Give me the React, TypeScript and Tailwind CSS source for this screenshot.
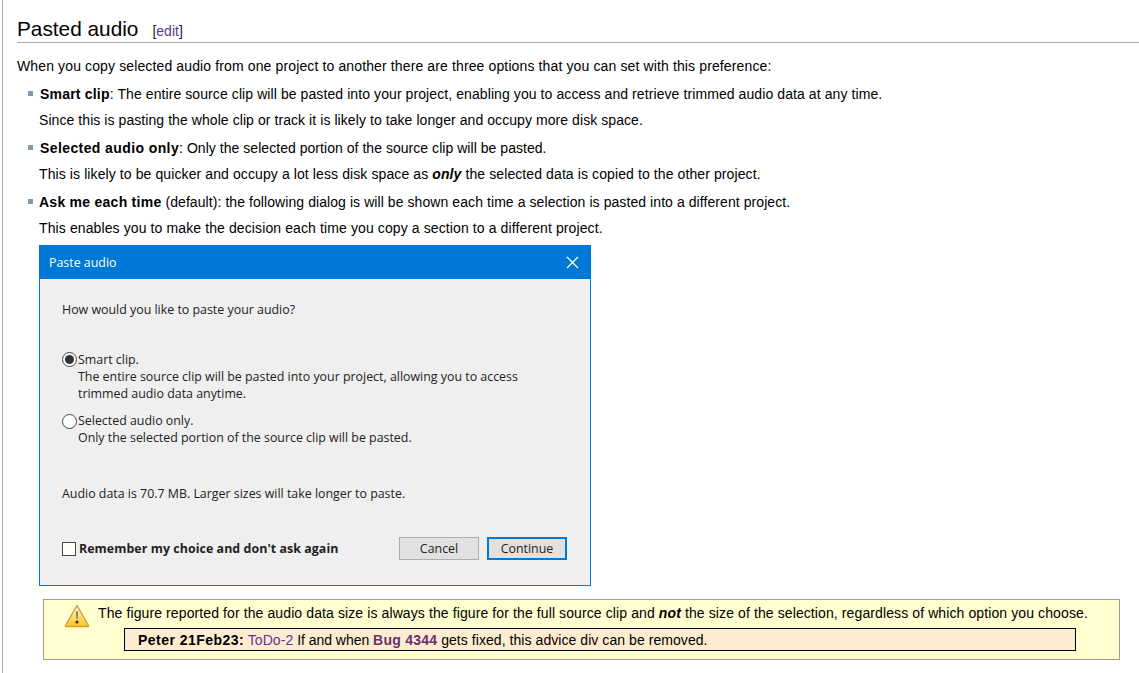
import React from "react";

const sans = "font-['Liberation_Sans',Arial,sans-serif]";
const dlg = "font-['Open_Sans','Noto_Sans',sans-serif]";

function Bullet({ first, second }: { first: React.ReactNode; second: React.ReactNode }) {
  return (
    <li className="relative h-[54px] pl-[22px]">
      <span className="absolute left-[11px] top-[10px] h-[5px] w-[5px] bg-[#7f9aa8]" />
      <p className="h-[26px] leading-[26px] whitespace-nowrap">{first}</p>
      <p className="h-[26px] leading-[26px] whitespace-nowrap">{second}</p>
    </li>
  );
}

function Radio({ checked }: { checked?: boolean }) {
  return (
    <span className="flex h-[15px] w-[15px] shrink-0 items-center justify-center rounded-full border border-[#444] bg-white">
      {checked && <span className="h-[9px] w-[9px] rounded-full bg-[#333]" />}
    </span>
  );
}

function WarnIcon() {
  return (
    <svg width="26" height="24" viewBox="0 0 26 24" className="shrink-0">
      <defs>
        <linearGradient id="w" x1="0" y1="0" x2="0" y2="1">
          <stop offset="0" stopColor="#fffbe0" />
          <stop offset="1" stopColor="#f7c61a" />
        </linearGradient>
      </defs>
      <path d="M13 1.5 L24.5 21.5 Q24.8 22.5 23.7 22.5 L2.3 22.5 Q1.2 22.5 1.5 21.5 Z" fill="url(#w)" stroke="#d69a3a" strokeWidth="1.4" strokeLinejoin="round" />
      <path d="M11.8 7.5 L14.2 7.5 L13.6 15 L12.4 15 Z" fill="#807a60" />
      <circle cx="13" cy="18" r="1.6" fill="#33301f" />
    </svg>
  );
}

export default function App() {
  return (
    <div className={`${sans} min-h-[673px] w-[1139px] overflow-hidden bg-white text-[14px] tracking-[0.11px] text-black`}>
      <div className="ml-[2px] min-h-[673px] border-l border-[#aaa] pl-[14px]">
        <div className="flex h-[43px] items-end border-b border-[#aaa]">
          <h2 className="text-[20.8px] leading-[26px] tracking-normal text-black">Pasted audio</h2>
          <span className="ml-[14px] text-[14px] leading-[22px] tracking-normal text-[#222]">
            [<span className="text-[#5a3696]">edit</span>]
          </span>
        </div>
        <p className="mt-[10px] h-[26px] leading-[26px] tracking-[0.127px] whitespace-nowrap">
          When you copy selected audio from one project to another there are three options that you can set with this preference:
        </p>
        <ul className="mt-[2px]">
          <Bullet
            first={<span className="tracking-[0.087px]"><b className="ml-[1px] tracking-[0.2px]">Smart clip</b>: The entire source clip will be pasted into your project, enabling you to access and retrieve trimmed audio data at any time.</span>}
            second={<span className="tracking-[0.07px]">Since this is pasting the whole clip or track it is likely to take longer and occupy more disk space.</span>}
          />
          <Bullet
            first={<span className="tracking-[0.04px]"><b className="ml-[1px] tracking-[0.4px]">Selected audio only</b>: Only the selected portion of the source clip will be pasted.</span>}
            second={<span className="tracking-[0.1px]">This is likely to be quicker and occupy a lot less disk space as <b><i>only</i></b> the selected data is copied to the other project.</span>}
          />
          <Bullet
            first={<span className="tracking-[0.075px]"><b className="tracking-[0.26px]">Ask me each time</b> (default): the following dialog is will be shown each time a selection is pasted into a different project.</span>}
            second="This enables you to make the decision each time you copy a section to a different project."
          />
        </ul>

        <div className={`${dlg} ml-[22px] mt-[2px] flex h-[341px] w-[552px] flex-col border border-[#0078d7] bg-[#efefef] text-[12.4px] tracking-normal text-[#222]`}>
          <div className="flex h-[33px] shrink-0 items-center justify-between bg-[#0078d7] pl-[9px] pr-[11px] text-white">
            <span className="mt-[1px]">Paste audio</span>
            <svg width="13" height="13" viewBox="0 0 13 13" fill="none" stroke="#fff" strokeWidth="1.2">
              <path d="M1 1 L12 12 M12 1 L1 12" />
            </svg>
          </div>
          <div className="flex flex-1 flex-col pl-[22px] pr-[23px]">
            <p className="mt-[22px] h-[18px] leading-[18px]">How would you like to paste your audio?</p>
            <div className="mt-[32px] flex flex-col leading-[17px]">
              <div className="flex items-center gap-[1px]"><Radio checked /><span>Smart clip.</span></div>
              <p className="pl-[16px]">The entire source clip will be pasted into your project, allowing you to access</p>
              <p className="pl-[16px]">trimmed audio data anytime.</p>
            </div>
            <div className="mt-[11px] flex flex-col leading-[16px]">
              <div className="flex items-center gap-[1px]"><Radio /><span>Selected audio only.</span></div>
              <p className="mt-[1px] pl-[16px]">Only the selected portion of the source clip will be pasted.</p>
            </div>
            <p className="mt-[39px] h-[18px] leading-[18px]">Audio data is 70.7 MB. Larger sizes will take longer to paste.</p>
            <div className="mt-[34px] flex h-[23px] items-center">
              <span className="h-[14px] w-[14px] shrink-0 border border-[#444] bg-white" />
              <span className="ml-[3px] mt-[2px] font-bold tracking-[0.06px]">Remember my choice and don't ask again</span>
              <button className="ml-auto h-[23px] w-[80px] border border-[#adadad] bg-[#e1e1e1] text-center leading-[20px] text-[#222]">Cancel</button>
              <button className="ml-[8px] h-[23px] w-[80px] border-2 border-[#0078d7] bg-[#e1e1e1] text-center leading-[18px] text-[#222]">Continue</button>
            </div>
          </div>
        </div>

        <div className="ml-[26px] mt-[13px] h-[61px] w-[1077px] border border-[#a0a090] bg-[#ffffd0] pt-[4px]">
          <div className="flex h-[19px] items-start pl-[20px]">
            <WarnIcon />
            <p className="ml-[8px] whitespace-nowrap leading-[19px] tracking-[0.105px]">
              The figure reported for the audio data size is always the figure for the full source clip and <b><i>not</i></b> the size of the selection, regardless of which option you choose.
            </p>
          </div>
          <div className="ml-[80px] mt-[5px] h-[23px] w-[952px] border border-black bg-[#fdecd0] pl-[13px] leading-[22px] tracking-[0.06px] whitespace-nowrap">
            <b className="tracking-[0.46px]">Peter 21Feb23:</b> <span className="text-[#5a3696]">ToDo-2</span> <span className="tracking-[-0.04px]">If and when</span> <b className="tracking-[0.23px] text-[#6a3070]">Bug 4344</b> gets fixed, this advice div can be removed.
          </div>
        </div>
      </div>
    </div>
  );
}
